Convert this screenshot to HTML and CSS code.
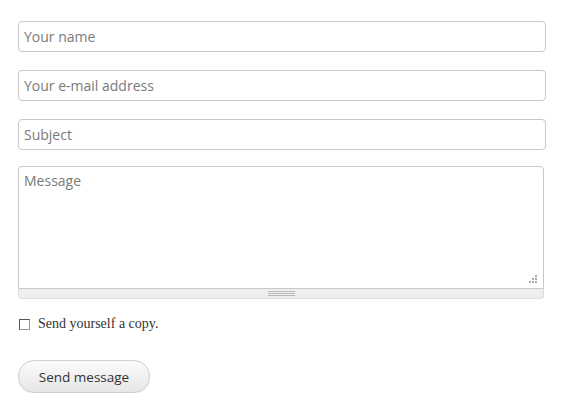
FILE: index.html
```html
<!DOCTYPE html>
<html>
<head>
<meta charset="utf-8">
<link rel="stylesheet" href="styles.css">
</head>
<body>
<form class="contact">
  <input class="field" type="text" placeholder="Your name">
  <input class="field" type="text" placeholder="Your e-mail address">
  <input class="field" type="text" placeholder="Subject">
  <div class="area-wrap">
    <div class="area">
      <span class="ph">Message</span>
      <svg class="resize" width="8" height="8" viewBox="0 0 8 8">
        <rect x="6" y="0" width="2" height="2" fill="#aaa"/>
        <rect x="3" y="3" width="2" height="2" fill="#aaa"/>
        <rect x="6" y="3" width="2" height="2" fill="#aaa"/>
        <rect x="0" y="6" width="2" height="2" fill="#aaa"/>
        <rect x="3" y="6" width="2" height="2" fill="#aaa"/>
        <rect x="6" y="6" width="2" height="2" fill="#aaa"/>
      </svg>
    </div>
    <div class="grippie"><span class="grip"></span></div>
  </div>
  <label class="copy"><span class="box"></span>Send yourself a copy.</label>
  <button type="button" class="send">Send message</button>
</form>
</body>
</html>
```
FILE: styles.css
```css
html, body { margin: 0; padding: 0; background: #fff; }
.contact {
  display: flex;
  flex-direction: column;
  align-items: flex-start;
  padding: 21px 0 0 18px;
  width: 528px;
}
.field {
  box-sizing: border-box;
  width: 528px;
  height: 31px;
  margin: 0 0 18px 0;
  padding: 0 5px 1px 5px;
  border: 1px solid #c8c8c8;
  border-radius: 4px;
  font-family: "Open Sans", sans-serif;
  font-size: 14px;
  color: #777;
  outline: none;
}
.field::placeholder { color: #7a7a7a; opacity: 1; }
.field:nth-of-type(3) { margin-bottom: 16px; }
.area-wrap { width: 526px; display: flex; flex-direction: column; }
.area {
  box-sizing: border-box;
  height: 123px;
  border: 1px solid #c8c8c8;
  border-radius: 4px 4px 0 0;
  padding: 4px 5px;
  font-family: "Open Sans", sans-serif;
  font-size: 14px;
  color: #7a7a7a;
  position: relative;
}
.ph { display: block; line-height: 19px; }
.resize { position: absolute; right: 6px; bottom: 5px; }
.grippie {
  box-sizing: border-box;
  height: 10px;
  background: #eee;
  border: 1px solid #ddd;
  border-top: none;
  border-radius: 0 0 4px 4px;
  display: flex;
  justify-content: center;
  align-items: center;
}
.grip {
  width: 27px;
  height: 5px;
  border-top: 1px solid #bbb;
  border-bottom: 1px solid #bbb;
  box-sizing: border-box;
  background: linear-gradient(#eee 0, #eee 1px, #bbb 1px, #bbb 2px, #eee 2px);
}
.copy {
  display: flex;
  align-items: center;
  margin-top: 18px;
  font-family: "Liberation Serif", serif;
  font-size: 14px;
  color: #333;
  height: 14px;
}
.box {
  width: 9px;
  height: 9px;
  border: 1px solid #555;
  border-right-color: #999;
  border-bottom-color: #999;
  background: #fff;
  margin: 0 8px 0 1px;
}
.send {
  margin-top: 29px;
  width: 132px;
  height: 33px;
  border: 1px solid #cfcfcf;
  border-radius: 16px;
  background: linear-gradient(#fbfbfb, #e6e6e6);
  font-family: "Open Sans", sans-serif;
  font-size: 13.5px;
  color: #333;
  box-shadow: 0 1px 1px rgba(0,0,0,0.08);
  padding: 0;
}
```
